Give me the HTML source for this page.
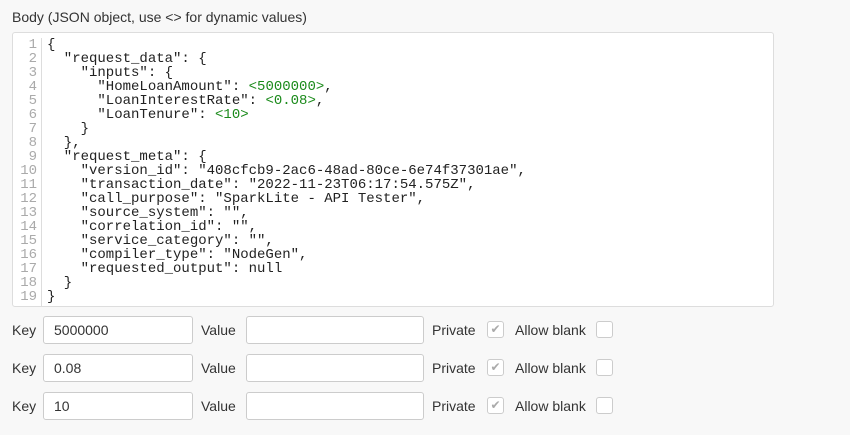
<!DOCTYPE html>
<html><head><style>
body{margin:0;background:#f8f8f8;font-family:"Liberation Sans",sans-serif;color:#333;width:850px;height:435px;position:relative;overflow:hidden}
.t{position:absolute;left:12px;top:9px;font-size:14px}
.ed{position:absolute;left:12px;top:32px;width:760px;height:273px;background:#fff;border:1px solid #ddd;border-radius:3px}
.g{position:absolute;left:0;top:5px;width:28px;border-right:1px solid #ddd;height:268px;text-align:right;color:#aaa;font:14px/14px "Liberation Mono",monospace}
.g div{padding-right:4px}
pre{position:absolute;left:34px;top:5px;margin:0;font:14px/14px "Liberation Mono",monospace;color:#222}
.n{color:#1a8a1a}
.l{position:absolute;font-size:14px}
.in{position:absolute;height:28px;background:#fff;border:1px solid #ccc;border-radius:3px;box-sizing:border-box;font-size:14px;line-height:26px;padding-left:10px}
.cb{position:absolute;width:17px;height:17px;background:#fff;border:1px solid #ccc;border-radius:3px;box-sizing:border-box}
.ck{color:#aaa;font-size:12px;text-align:center;line-height:15px}
</style></head><body>
<div class="t">Body (JSON object, use &lt;&gt; for dynamic values)</div>
<div class="ed"><div class="g"><div>1</div><div>2</div><div>3</div><div>4</div><div>5</div><div>6</div><div>7</div><div>8</div><div>9</div><div>10</div><div>11</div><div>12</div><div>13</div><div>14</div><div>15</div><div>16</div><div>17</div><div>18</div><div>19</div></div>
<pre>{
  "request_data": {
    "inputs": {
      "HomeLoanAmount": <span class="n">&lt;5000000&gt;</span>,
      "LoanInterestRate": <span class="n">&lt;0.08&gt;</span>,
      "LoanTenure": <span class="n">&lt;10&gt;</span>
    }
  },
  "request_meta": {
    "version_id": "408cfcb9-2ac6-48ad-80ce-6e74f37301ae",
    "transaction_date": "2022-11-23T06:17:54.575Z",
    "call_purpose": "SparkLite - API Tester",
    "source_system": "",
    "correlation_id": "",
    "service_category": "",
    "compiler_type": "NodeGen",
    "requested_output": null
  }
}</pre></div>

<div class="l" style="left:12px;top:322px">Key</div><div class="in" style="left:43px;top:316px;width:150px">5000000</div>
<div class="l" style="left:201px;top:322px">Value</div><div class="in" style="left:246px;top:316px;width:178px"></div>
<div class="l" style="left:432px;top:322px">Private</div><div class="cb ck" style="left:487px;top:321px">✔</div>
<div class="l" style="left:515px;top:322px">Allow blank</div><div class="cb" style="left:596px;top:321px"></div>

<div class="l" style="left:12px;top:360px">Key</div><div class="in" style="left:43px;top:354px;width:150px">0.08</div>
<div class="l" style="left:201px;top:360px">Value</div><div class="in" style="left:246px;top:354px;width:178px"></div>
<div class="l" style="left:432px;top:360px">Private</div><div class="cb ck" style="left:487px;top:359px">✔</div>
<div class="l" style="left:515px;top:360px">Allow blank</div><div class="cb" style="left:596px;top:359px"></div>

<div class="l" style="left:12px;top:398px">Key</div><div class="in" style="left:43px;top:392px;width:150px">10</div>
<div class="l" style="left:201px;top:398px">Value</div><div class="in" style="left:246px;top:392px;width:178px"></div>
<div class="l" style="left:432px;top:398px">Private</div><div class="cb ck" style="left:487px;top:397px">✔</div>
<div class="l" style="left:515px;top:398px">Allow blank</div><div class="cb" style="left:596px;top:397px"></div>
</body></html>
